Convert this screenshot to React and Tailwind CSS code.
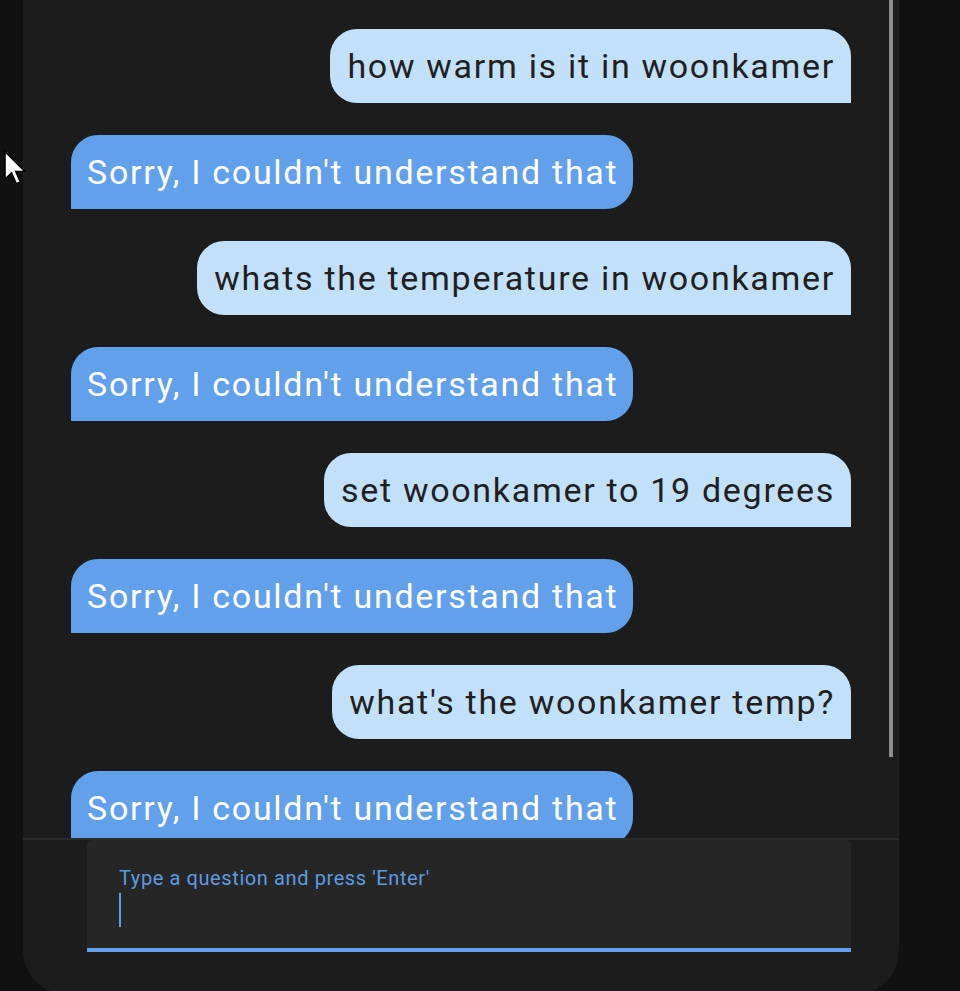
import React from "react";

const messages = [
  { who: "user", text: "how warm is it in woonkamer" },
  { who: "hass", text: "Sorry, I couldn't understand that" },
  { who: "user", text: "whats the temperature in woonkamer" },
  { who: "hass", text: "Sorry, I couldn't understand that" },
  { who: "user", text: "set woonkamer to 19 degrees" },
  { who: "hass", text: "Sorry, I couldn't understand that" },
  { who: "user", text: "what's the woonkamer temp?" },
  { who: "hass", text: "Sorry, I couldn't understand that" },
];

const Bubble = ({ who, text }) => {
  const isUser = who === "user";
  return (
    <div
      className={
        isUser
          ? "self-end shrink-0 bg-[#c3e0fa] text-[#1f1f1f] rounded-[27px] rounded-br-none pl-[17px] pr-[16px] py-4 text-[34px] leading-[42px] tracking-[1.7px] whitespace-nowrap"
          : "self-start shrink-0 bg-[#62a0ec] text-white rounded-[27px] rounded-bl-none pl-4 pr-[15px] py-4 text-[34px] leading-[42px] tracking-[1.7px] whitespace-nowrap"
      }
    >
      {text}
    </div>
  );
};

const Pointer = () => (
  <svg
    className="absolute left-[3px] top-[150px]"
    width="24"
    height="38"
    viewBox="0 0 13 21"
  >
    <path
      d="M1 1 L1 16 L4.6 12.6 L7.2 18.6 L9.4 17.6 L6.9 11.8 L11.8 11.8 Z"
      fill="#ffffff"
      stroke="#000000"
      strokeWidth="0.8"
      strokeLinejoin="miter"
    />
  </svg>
);

export default function App() {
  return (
    <div
      className="relative w-[960px] h-[991px] overflow-hidden bg-[#111111] flex"
      style={{ fontFamily: "Roboto, 'Noto Sans', sans-serif" }}
    >
      <div className="ml-[23px] w-[876px] h-[995px] shrink-0 bg-[#1c1c1c] rounded-b-[45px] flex flex-col overflow-hidden">
        <div className="relative h-[838px] shrink-0 overflow-hidden pl-[48px] pr-[48px] pt-[29px] flex flex-col gap-[32px]">
          {messages.map((m, i) => (
            <Bubble key={i} who={m.who} text={m.text} />
          ))}
          <div className="absolute right-[6px] top-0 w-[4px] h-[757px] bg-[#8c8c8c]" />
        </div>
        <div className="h-[2px] shrink-0 bg-[#2c2c2c]" />
        <div className="pl-[64px] pr-[48px]">
          <div className="h-[112px] bg-[#262626] rounded-t-[5px] flex flex-col border-b-4 border-[#62a0ec]">
            <div className="pl-[32px] pt-[26px] text-[20px] leading-[24px] tracking-[0.6px] text-[#5e9be2]">
              Type a question and press 'Enter'
            </div>
            <div className="ml-[32px] mt-[3px] w-[2px] h-[34px] bg-[#62a0ec]" />
          </div>
        </div>
      </div>
      <Pointer />
    </div>
  );
}
